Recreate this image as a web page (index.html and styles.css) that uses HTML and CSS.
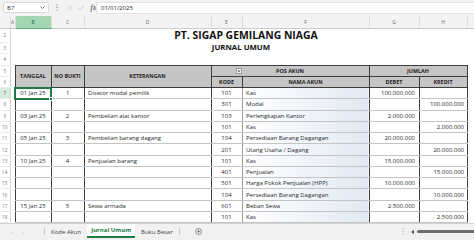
FILE: index.html
```html
<!DOCTYPE html>
<html>
<head>
<meta charset="utf-8">
<link rel="stylesheet" href="styles.css">
</head>
<body>
<div class="app">
  <div class="fbar">
    <div class="namebox"><span>B7</span><svg class="chev" width="5" height="3" viewBox="0 0 5 3"><path d="M0.5 0.5 L2.5 2.5 L4.5 0.5" fill="none" stroke="#555" stroke-width="0.8"/></svg></div>
    <div class="fdots"><svg width="2" height="7" viewBox="0 0 2 7"><circle cx="1" cy="1" r="0.6" fill="#666"/><circle cx="1" cy="3.5" r="0.6" fill="#666"/><circle cx="1" cy="6" r="0.6" fill="#666"/></svg></div>
    <div class="fbtns">
      <svg width="6" height="6" viewBox="0 0 6 6"><path d="M0.5 0.5 L5.5 5.5 M5.5 0.5 L0.5 5.5" stroke="#c4c4c4" stroke-width="0.9"/></svg>
      <svg width="7" height="6" viewBox="0 0 7 6"><path d="M0.5 3.2 L2.5 5.2 L6.5 0.6" fill="none" stroke="#c4c4c4" stroke-width="0.9"/></svg>
      <span class="fx">fx</span>
    </div>
    <div class="finput">01/01/2025</div>
  </div>

  <table class="sheet">
    <colgroup>
      <col class="c-rh"><col class="c-a"><col class="c-b"><col class="c-c"><col class="c-d"><col class="c-e"><col class="c-f"><col class="c-g"><col class="c-h"><col class="c-i">
    </colgroup>
    <thead>
      <tr class="colhdr">
        <th class="corner"></th><th>A</th><th class="sel">B</th><th>C</th><th>D</th><th>E</th><th>F</th><th>G</th><th>H</th><th></th>
      </tr>
    </thead>
    <tbody>
      <tr class="r-title">
        <td class="rh">2</td><td></td>
        <td colspan="7" class="title">PT. SIGAP GEMILANG NIAGA</td>
        <td></td>
      </tr>
      <tr class="r">
        <td class="rh">3</td><td></td>
        <td colspan="7" class="subtitle">JURNAL UMUM</td>
        <td></td>
      </tr>
      <tr class="r">
        <td class="rh">4</td><td></td><td colspan="7"></td><td></td>
      </tr>
      <tr class="r">
        <td class="rh">5</td><td></td>
        <th class="hd" rowspan="2">TANGGAL</th>
        <th class="hd" rowspan="2">NO BUKTI</th>
        <th class="hd" rowspan="2">KETERANGAN</th>
        <th class="hd pos" colspan="2">POS AKUN<span class="filter"><svg width="4" height="3" viewBox="0 0 4 3"><path d="M0.3 0.5 L3.7 0.5 L2 2.6 Z" fill="#666"/></svg></span></th>
        <th class="hd" colspan="2">JUMLAH</th>
        <td></td>
      </tr>
      <tr class="r">
        <td class="rh">6</td><td></td>
        <th class="hd">KODE</th>
        <th class="hd">NAMA AKUN</th>
        <th class="hd">DEBET</th>
        <th class="hd">KREDIT</th>
        <td></td>
      </tr>
      <tr class="r">
        <td class="rh rsel">7</td><td></td>
        <td class="b active">01 Jan 25<span class="handle"></span></td><td class="c">1</td><td class="d">Disetor modal pemilik</td>
        <td class="e">101</td><td class="f">Kas</td><td class="g">100.000.000</td><td class="h"></td><td></td>
      </tr>
      <tr class="r">
        <td class="rh">8</td><td></td>
        <td class="b"></td><td class="c"></td><td class="d"></td>
        <td class="e">301</td><td class="f">Modal</td><td class="g"></td><td class="h">100.000.000</td><td></td>
      </tr>
      <tr class="r">
        <td class="rh">9</td><td></td>
        <td class="b">03 Jan 25</td><td class="c">2</td><td class="d">Pembelian alat kantor</td>
        <td class="e">103</td><td class="f">Perlengkapan Kantor</td><td class="g">2.000.000</td><td class="h"></td><td></td>
      </tr>
      <tr class="r">
        <td class="rh">10</td><td></td>
        <td class="b"></td><td class="c"></td><td class="d"></td>
        <td class="e">101</td><td class="f">Kas</td><td class="g"></td><td class="h">2.000.000</td><td></td>
      </tr>
      <tr class="r">
        <td class="rh">11</td><td></td>
        <td class="b">05 Jan 25</td><td class="c">3</td><td class="d">Pembelian barang dagang</td>
        <td class="e">104</td><td class="f">Persediaan Barang Dagangan</td><td class="g">20.000.000</td><td class="h"></td><td></td>
      </tr>
      <tr class="r">
        <td class="rh">12</td><td></td>
        <td class="b"></td><td class="c"></td><td class="d"></td>
        <td class="e">201</td><td class="f">Utang Usaha / Dagang</td><td class="g"></td><td class="h">20.000.000</td><td></td>
      </tr>
      <tr class="r">
        <td class="rh">13</td><td></td>
        <td class="b">10 Jan 25</td><td class="c">4</td><td class="d">Penjualan barang</td>
        <td class="e">101</td><td class="f">Kas</td><td class="g">15.000.000</td><td class="h"></td><td></td>
      </tr>
      <tr class="r">
        <td class="rh">14</td><td></td>
        <td class="b"></td><td class="c"></td><td class="d"></td>
        <td class="e">401</td><td class="f">Penjualan</td><td class="g"></td><td class="h">15.000.000</td><td></td>
      </tr>
      <tr class="r">
        <td class="rh">15</td><td></td>
        <td class="b"></td><td class="c"></td><td class="d"></td>
        <td class="e">501</td><td class="f">Harga Pokok Penjualan (HPP)</td><td class="g">10.000.000</td><td class="h"></td><td></td>
      </tr>
      <tr class="r">
        <td class="rh">16</td><td></td>
        <td class="b"></td><td class="c"></td><td class="d"></td>
        <td class="e">104</td><td class="f">Persediaan Barang Dagangan</td><td class="g"></td><td class="h">10.000.000</td><td></td>
      </tr>
      <tr class="r">
        <td class="rh">17</td><td></td>
        <td class="b">15 Jan 25</td><td class="c">5</td><td class="d">Sewa armada</td>
        <td class="e">601</td><td class="f">Beban Sewa</td><td class="g">2.500.000</td><td class="h"></td><td></td>
      </tr>
      <tr class="r">
        <td class="rh">18</td><td></td>
        <td class="b"></td><td class="c"></td><td class="d"></td>
        <td class="e">101</td><td class="f">Kas</td><td class="g"></td><td class="h">2.500.000</td><td></td>
      </tr>
    </tbody>
  </table>

  <div class="tabs">
    <div class="nav"><span>‹</span><span>›</span></div>
    <div class="tsep"></div>
    <div class="tab">Kode Akun</div>
    <div class="tab active">Jurnal Umum</div>
    <div class="tab">Buku Besar</div>
    <div class="tsep"></div>
    <div class="add"><svg width="7" height="7" viewBox="0 0 7 7"><circle cx="3.5" cy="3.5" r="3" fill="none" stroke="#666" stroke-width="0.7"/><path d="M3.5 1.8 V5.2 M1.8 3.5 H5.2" stroke="#666" stroke-width="0.7"/></svg></div>
    <div class="spacer"></div>
    <div class="hscroll">
      <svg width="2" height="7" viewBox="0 0 2 7"><circle cx="1" cy="1" r="0.5" fill="#888"/><circle cx="1" cy="3.5" r="0.5" fill="#888"/><circle cx="1" cy="6" r="0.5" fill="#888"/></svg>
      <svg class="larr" width="3" height="4" viewBox="0 0 3 4"><path d="M3 0 L0 2 L3 4 Z" fill="#555"/></svg>
      <div class="thumb"></div>
    </div>
  </div>
</div>
</body>
</html>
```

FILE: styles.css
```css
* { box-sizing: border-box; margin: 0; padding: 0; }
html, body { width: 474px; height: 240px; overflow: hidden; background: #fff; }
body { font-family: "Open Sans", "Liberation Sans", sans-serif; color: #222; }

.app { display: flex; flex-direction: column; height: 240px; }

/* formula bar */
.fbar {
  height: 16px; flex: none; display: flex; align-items: center;
  background: #f3f3f3; padding: 0 0 1px 3px;
}
.namebox {
  width: 46px; height: 11px; background: #fff; border: 1px solid #d8d8d8; border-radius: 2px;
  display: flex; align-items: center; justify-content: space-between;
  padding: 0 3px 0 3px; font-size: 6px; color: #333;
}
.fdots { width: 12px; display: flex; justify-content: center; align-items: center; margin-left: 2px; }
.fbtns { display: flex; align-items: center; gap: 6px; padding-left: 4px; width: 33px; }
.fx { font-family: "Liberation Serif", serif; font-style: italic; font-size: 7.5px; color: #333; }
.finput {
  flex: 1; height: 12px; background: #fff; border: 1px solid #e2e2e2; border-right: none;
  font-size: 6px; line-height: 10px; padding-left: 4px; color: #222;
}

/* sheet */
.sheet {
  flex: none; border-collapse: collapse; table-layout: fixed; width: 474px;
  font-size: 6px; line-height: 8px;
}
.c-rh { width: 10px; } .c-a { width: 5px; } .c-b { width: 36px; } .c-c { width: 33px; }
.c-d { width: 127px; } .c-e { width: 31px; } .c-f { width: 127px; } .c-g { width: 50px; }
.c-h { width: 48px; } .c-i { width: 7px; }

.sheet td, .sheet th { padding: 0; white-space: nowrap; overflow: hidden; }

.colhdr { height: 12px; }
.colhdr th {
  background: #f3f3f3; color: #6a6a6a; font-weight: normal; font-size: 5px;
  border-right: 1px solid #dedede; border-bottom: 1px solid #cdcdcd; text-align: center;
}
.colhdr th.sel { background: #a5d6b4; color: #1c6b3c; border-bottom: 1px solid #5fae7b; }
.colhdr th.corner { background: #f3f3f3; }

.r-title { height: 14.5px; }
.r { height: 11.28px; }

.rh {
  color: #7a7a7a; font-size: 4.6px; text-align: center; background: #fff;
  border-right: 1px solid #d6d6d6; border-bottom: 1px solid #ececec;
}
.rh.rsel { background: #d5ecdd; color: #1c6b3c; }

.title {
  font-weight: 700; font-size: 10.4px; line-height: 11px; text-align: center;
  vertical-align: bottom; padding: 0 0 2px 10px !important; color: #111;
}
.subtitle {
  font-weight: 700; font-size: 7.8px; line-height: 9px; text-align: center;
  vertical-align: top; padding-top: 0.5px !important; color: #111;
}

.hd {
  background: #c6c6c6; border: 1px solid #3e3e3e; font-weight: 700; font-size: 5.4px;
  text-align: center; color: #1e1e1e;
}
.pos { position: relative; }
.filter {
  position: absolute; left: 24px; top: 2.5px; width: 6px; height: 6px;
  background: #fff; border: 1px solid #9a9a9a; display: flex; align-items: center; justify-content: center;
}

.b, .c, .d, .e, .f, .g, .h { border-bottom: 1px solid #c4c4c4; color: #2a2a2a; }
.b { text-align: center; border-left: 1px solid #3e3e3e; border-right: 1px solid #3e3e3e; }
.c { text-align: center; border-right: 1px solid #3e3e3e; }
.d { padding-left: 3.5px !important; border-right: 1px solid #3e3e3e; }
.e { text-align: center; border-right: 1px solid #9c9c9c; }
.f {
  padding-left: 3.5px !important; border-right: 1px solid #3e3e3e;
  background: linear-gradient(90deg, #ffffff 0%, #f1f5fa 45%, #e2e9f2 100%);
}
.g { text-align: right; padding-right: 3.5px !important; border-right: 1px solid #3e3e3e; }
.h { text-align: right; padding-right: 2.5px !important; border-right: 1px solid #3e3e3e; }

.b.active { border: 2px solid #1f7a45; position: relative; overflow: visible; }
.handle {
  position: absolute; right: -3px; bottom: -3px; width: 4px; height: 4px;
  background: #1f7a45; border: 1px solid #fff;
}

/* sheet tabs */
.tabs {
  flex: 1; display: flex; align-items: stretch; background: #f1f1f1;
  border-top: 1px solid #d2d2d2; font-size: 6px; color: #444; white-space: nowrap;
}
.nav { width: 44px; display: flex; align-items: center; gap: 10px; padding-left: 11px; color: #b0b0b0; font-size: 6px; }
.tsep { width: 1px; margin: 4px 0 5px; background: #c9c9c9; }
.tab { display: flex; align-items: center; padding: 0 6px 1px; }
.tab.active {
  background: #fff; color: #1f7a45; font-weight: 700; padding: 0 4px 0;
  border-bottom: 2px solid #1f7a45; margin-bottom: 2px; justify-content: center;
}
.add { width: 38px; display: flex; align-items: center; justify-content: center; padding-bottom: 1px; }
.spacer { flex: 1; }
.hscroll { display: flex; align-items: center; gap: 7px; width: 72px; padding-bottom: 1px; }
.larr { margin-right: -4px; }
.thumb { flex: 1; height: 3px; background: #6d6d6d; border-radius: 1.5px 0 0 1.5px; }
```
